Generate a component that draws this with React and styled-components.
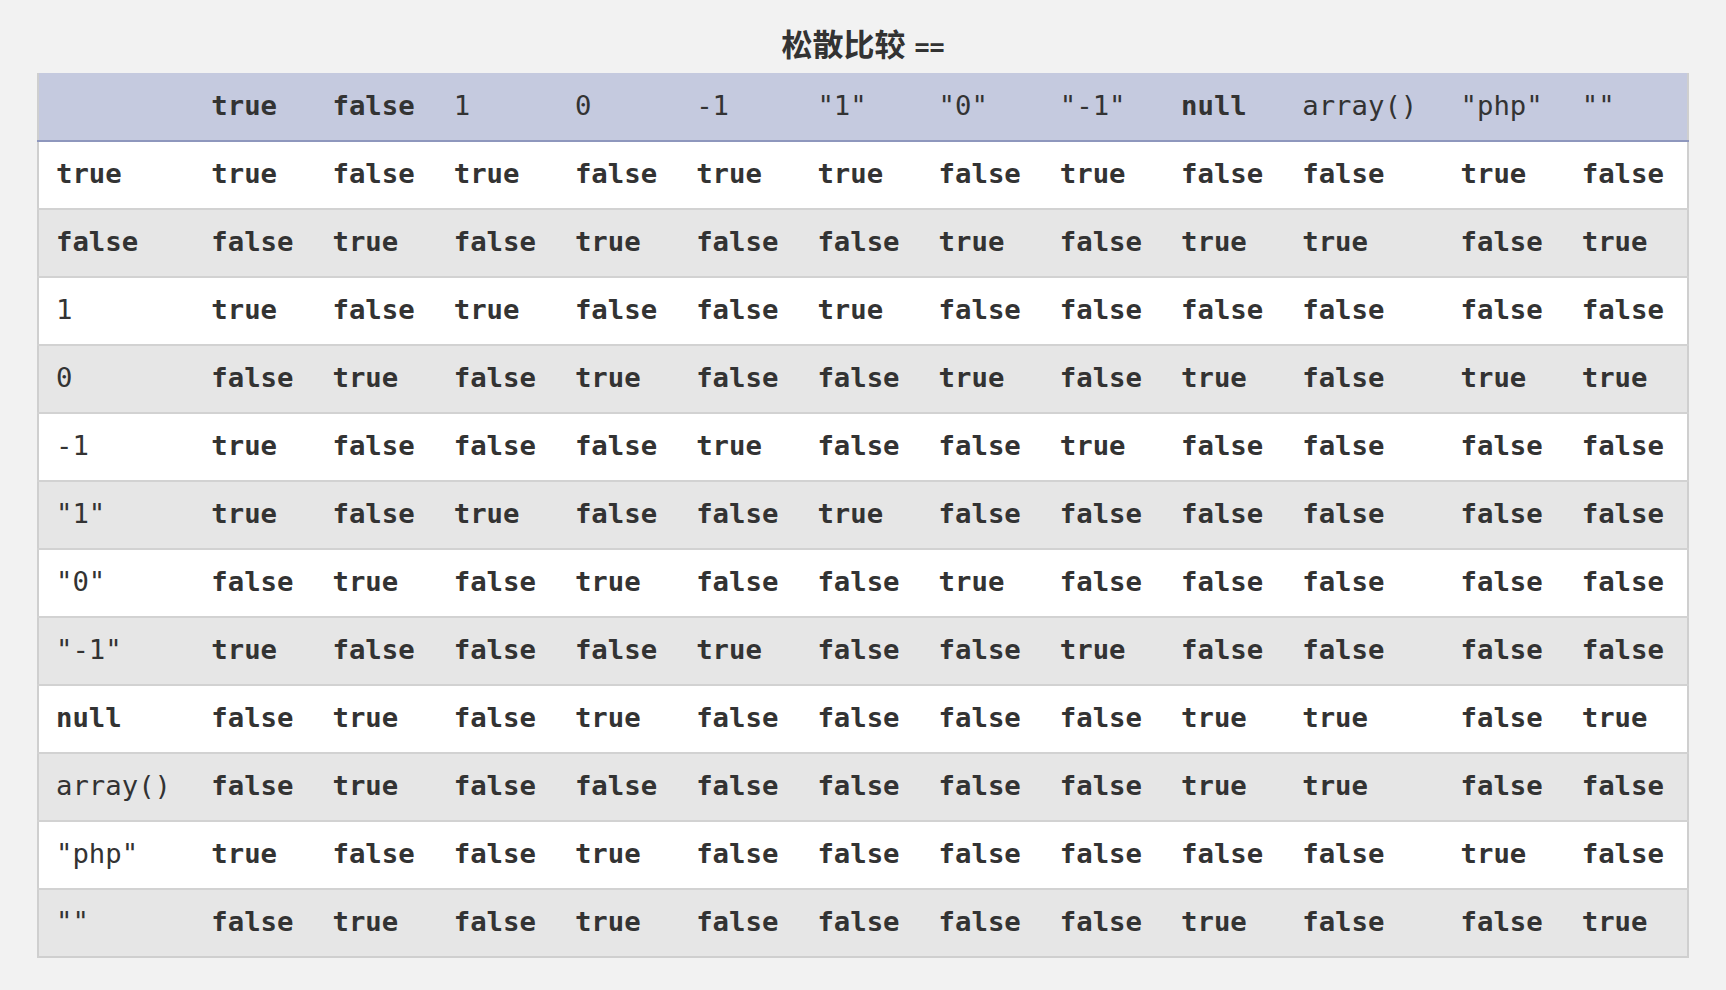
import React from 'react'
import styled, { createGlobalStyle } from 'styled-components'

const GlobalStyle = createGlobalStyle`
  html, body {
    margin: 0;
    padding: 0;
    background: #f2f2f2;
  }
`

const headers = [
  { label: 'true', bold: true },
  { label: 'false', bold: true },
  { label: '1' },
  { label: '0' },
  { label: '-1' },
  { label: '"1"' },
  { label: '"0"' },
  { label: '"-1"' },
  { label: 'null', bold: true },
  { label: 'array()' },
  { label: '"php"' },
  { label: '""' },
]

const widths = [156, 121, 121, 121, 121, 121, 121, 121, 121, 121, 158, 121, 123]

const T = true
const F = false

const matrix = [
  [T, F, T, F, T, T, F, T, F, F, T, F],
  [F, T, F, T, F, F, T, F, T, T, F, T],
  [T, F, T, F, F, T, F, F, F, F, F, F],
  [F, T, F, T, F, F, T, F, T, F, T, T],
  [T, F, F, F, T, F, F, T, F, F, F, F],
  [T, F, T, F, F, T, F, F, F, F, F, F],
  [F, T, F, T, F, F, T, F, F, F, F, F],
  [T, F, F, F, T, F, F, T, F, F, F, F],
  [F, T, F, T, F, F, F, F, T, T, F, T],
  [F, T, F, F, F, F, F, F, T, T, F, F],
  [T, F, F, T, F, F, F, F, F, F, T, F],
  [F, T, F, T, F, F, F, F, T, F, F, T],
]

const Page = styled.div`
  padding-top: 23px;
  padding-bottom: 32px;
  font-family: "DejaVu Sans Mono", "Liberation Mono", monospace;
  color: #333;
`

const Title = styled.h2`
  margin: 0 0 10px;
  height: 40px;
  line-height: 40px;
  text-align: center;
  font-size: 31px;
  font-weight: 700;
  font-family: "Noto Sans CJK SC", "Noto Sans", sans-serif;
  color: #333;
`

const Op = styled.span`
  font-family: "DejaVu Sans Mono", monospace;
  font-size: 25px;
  margin-left: 9px;
`

const Table = styled.table`
  margin: 0 auto;
  width: 1652px;
  table-layout: fixed;
  border-collapse: collapse;
  border: 2px solid #cfcfcf;
  border-top: none;
  font-size: 27.3px;
`

const HeadRow = styled.tr`
  background: #c5cadf;
  border-bottom: 2px solid #8e97bd;
`

const Row = styled.tr`
  background: ${(p) => (p.$odd ? '#e6e6e6' : '#ffffff')};
  border-top: 2px solid #d2d2d2;
`

const Cell = styled.td`
  height: 62px;
  padding: 0 0 4px 17px;
  text-align: left;
  white-space: nowrap;
  font-weight: ${(p) => (p.$bold ? 700 : 400)};
  color: #333;
`

const HeadCell = styled(Cell).attrs({ as: 'th' })`
  height: 65px;
  padding-bottom: 2px;
`

export default function App() {
  return (
    <Page>
      <GlobalStyle />
      <Title>
        松散比较<Op>==</Op>
      </Title>
      <Table>
        <colgroup>
          {widths.map((w, i) => (
            <col key={i} style={{ width: w }} />
          ))}
        </colgroup>
        <thead>
          <HeadRow>
            <HeadCell />
            {headers.map((h) => (
              <HeadCell key={h.label} $bold={h.bold}>
                {h.label}
              </HeadCell>
            ))}
          </HeadRow>
        </thead>
        <tbody>
          {matrix.map((row, r) => (
            <Row key={r} $odd={r % 2 === 1}>
              <Cell $bold={headers[r].bold}>{headers[r].label}</Cell>
              {row.map((v, c) => (
                <Cell key={c} $bold>
                  {v ? 'true' : 'false'}
                </Cell>
              ))}
            </Row>
          ))}
        </tbody>
      </Table>
    </Page>
  )
}
